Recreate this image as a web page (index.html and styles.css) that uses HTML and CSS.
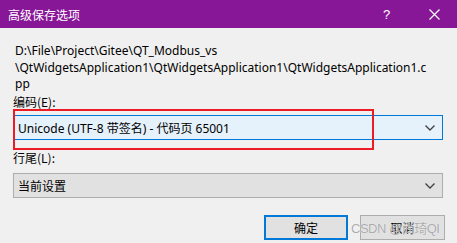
FILE: index.html
```html
<!DOCTYPE html>
<html lang="zh">
<head>
<meta charset="utf-8">
<title>高级保存选项</title>
<link rel="stylesheet" href="styles.css">
</head>
<body>
<div class="dialog">
  <div class="titlebar">
    <span class="title">高级保存选项</span>
    <span class="help">?</span>
    <span class="close">
      <svg width="11" height="11" viewBox="0 0 11 11"><path d="M0.5 0.5 L10.5 10.5 M10.5 0.5 L0.5 10.5" stroke="#fff" stroke-width="1.2" fill="none"/></svg>
    </span>
  </div>
  <div class="content">
    <div class="path">D:\File\Project\Gitee\QT_Modbus_vs<br>\QtWidgetsApplication1\QtWidgetsApplication1\QtWidgetsApplication1.c<br>pp</div>
    <div class="label label-enc">编码(E):</div>
    <div class="combo combo-focus">
      <span class="combo-text">Unicode (UTF-8 带签名) - 代码页 65001</span>
      <svg class="chev" width="10" height="6" viewBox="0 0 10 6"><path d="M0.5 0.5 L5 5 L9.5 0.5" stroke="#404040" stroke-width="1.3" fill="none"/></svg>
    </div>
    <div class="label label-eol">行尾(L):</div>
    <div class="combo combo-normal">
      <span class="combo-text">当前设置</span>
      <svg class="chev" width="10" height="6" viewBox="0 0 10 6"><path d="M0.5 0.5 L5 5 L9.5 0.5" stroke="#404040" stroke-width="1.3" fill="none"/></svg>
    </div>
    <div class="buttons">
      <div class="btn btn-default">确定</div>
      <div class="btn">取消</div>
    </div>
  </div>
  <div class="highlight"></div>
  <div class="watermark">CSDN @尚琦QI</div>
</div>
</body>
</html>
```
FILE: styles.css
```css
html, body {
  margin: 0;
  padding: 0;
}
body {
  width: 457px;
  height: 243px;
  overflow: hidden;
  background: #f0f0f0;
  font-family: "Noto Sans", "Noto Sans CJK SC", sans-serif;
  font-size: 12px;
  color: #000;
}
.dialog {
  position: relative;
  width: 457px;
  height: 243px;
}
.titlebar {
  height: 28px;
  background: #881798;
  color: #fff;
  display: flex;
  align-items: center;
  padding-left: 8px;
  box-sizing: border-box;
}
.title {
  flex: 1;
  font-size: 12px;
  font-family: "Noto Sans CJK SC", sans-serif;
}
.help {
  width: 12px;
  margin-right: 34px;
  font-size: 13px;
  font-family: "Liberation Sans", sans-serif;
  line-height: 1;
}
.close {
  display: flex;
  width: 11px;
  margin-right: 17px;
}
.content {
  padding: 15px 14px 0 12px;
  display: flex;
  flex-direction: column;
}
.path {
  margin-left: 3px;
  line-height: 16.5px;
  font-family: "Noto Sans", "Noto Sans CJK SC", sans-serif;
}
.label {
  font-family: "Noto Sans CJK SC", sans-serif;
  line-height: 16px;
  margin-left: 1px;
}
.label-enc {
  margin-top: 1px;
}
.combo {
  box-sizing: border-box;
  height: 25px;
  display: flex;
  align-items: center;
  padding: 0 7px 0 4px;
  margin-left: 1px;
}
.combo-text {
  flex: 1;
  font-family: "Noto Sans", "Noto Sans CJK SC", sans-serif;
}
.combo-focus {
  margin-top: 5.5px;
  background: #e5f1fb;
  border: 1px solid #0078d7;
}
.combo-normal {
  margin-top: 7px;
  background: #e1e1e1;
  border: 1px solid #adadad;
}
.label-eol {
  margin-top: 10px;
}
.chev {
  display: block;
}
.buttons {
  margin-top: 17px;
  display: flex;
  justify-content: flex-end;
  gap: 12px;
  margin-right: -2px;
}
.btn {
  box-sizing: border-box;
  width: 85px;
  height: 25px;
  background: #e1e1e1;
  border: 1px solid #adadad;
  display: flex;
  align-items: center;
  justify-content: center;
  font-family: "Noto Sans CJK SC", sans-serif;
}
.btn-default {
  width: 84px;
  border: 2px solid #0078d7;
}
.highlight {
  position: absolute;
  left: 13px;
  top: 109px;
  width: 361px;
  height: 41px;
  box-sizing: border-box;
  border: 2px solid #ed1c24;
}
.watermark {
  position: absolute;
  left: 351px;
  top: 218px;
  font-family: "Liberation Sans", "Noto Sans CJK SC", sans-serif;
  font-size: 13px;
  letter-spacing: -0.5px;
  color: rgba(150, 150, 150, 0.8);
  text-shadow: 0 0 1px #fff;
  white-space: nowrap;
}
```
